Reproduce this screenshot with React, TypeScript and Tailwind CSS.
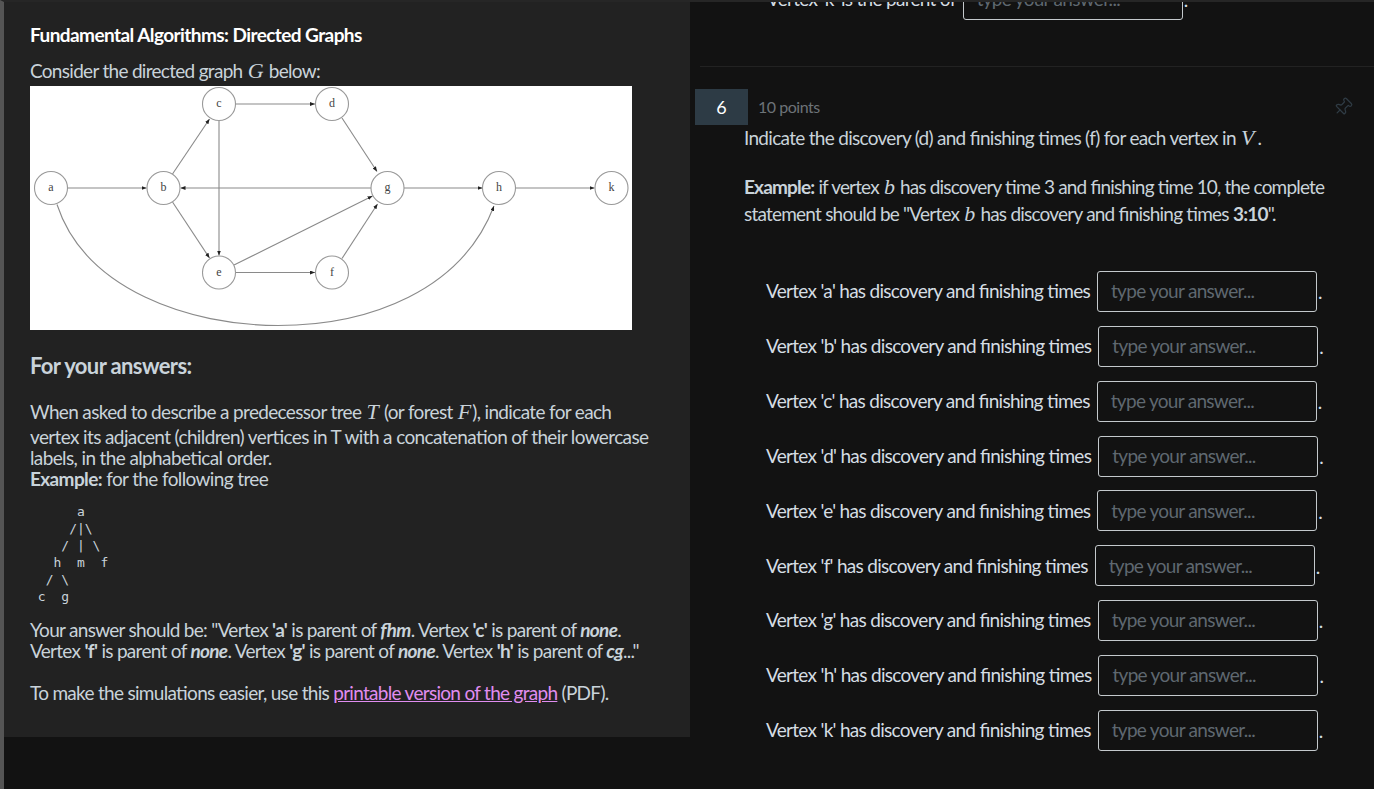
import { Pin } from 'lucide-react';

const nodes: [string, number, number][] = [
  ['a', 51, 188],
  ['b', 163.5, 188],
  ['c', 219, 104],
  ['d', 332, 104],
  ['e', 219, 272.5],
  ['f', 332, 272.5],
  ['g', 387.5, 188],
  ['h', 499, 188],
  ['k', 611.5, 188],
];

const edges: [number, number, number, number][] = [
  [67.5, 188, 146.5, 188],
  [172.5, 174, 209.5, 119],
  [235.5, 104, 315, 104],
  [219, 120.5, 219, 255.5],
  [342, 118, 377, 171.5],
  [371, 188, 180.5, 188],
  [172.5, 202, 209.5, 258],
  [235.5, 272.5, 315, 272.5],
  [234, 265, 372.5, 196],
  [342, 258.5, 377.5, 204],
  [404, 188, 482.5, 188],
  [515.5, 188, 594.5, 188],
];

const vertices = ['a', 'b', 'c', 'd', 'e', 'f', 'g', 'h', 'k'];

function Graph() {
  return (
    <svg viewBox="30 86 602 244" className="block w-[602px] h-[244px] bg-white tracking-normal">
      <defs>
        <marker id="tip" markerWidth="5" markerHeight="4" refX="5" refY="2" orient="auto" markerUnits="userSpaceOnUse">
          <path d="M0 0L5 2L0 4z" fill="#222" />
        </marker>
      </defs>
      {edges.map(([x1, y1, x2, y2], i) => (
        <line key={i} x1={x1} y1={y1} x2={x2} y2={y2} stroke="#8a8a8a" strokeWidth="1.1" markerEnd="url(#tip)" />
      ))}
      <path
        d="M57 204.5C85 290 190 325.5 278 325.5C370 325.5 462 290 494 206"
        fill="none"
        stroke="#8a8a8a"
        strokeWidth="1.1"
        markerEnd="url(#tip)"
      />
      {nodes.map(([label, x, y]) => (
        <g key={label}>
          <circle cx={x} cy={y} r="16.5" fill="white" stroke="#999" strokeWidth="1.1" />
          <text x={x} y={y + 3} textAnchor="middle" fontSize="12" fill="#444" fontFamily="'Liberation Serif', serif">
            {label}
          </text>
        </g>
      ))}
    </svg>
  );
}

function M({ children }: { children: string }) {
  return <span className="mx-px font-['Liberation_Serif',serif] italic text-[22px] leading-none tracking-normal">{children}</span>;
}

function AnswerRow({ label }: { label: string }) {
  return (
    <div className="flex items-center h-[41px] mb-[13.86px] pl-[76px] text-[#d5dde3]">
      <span>{label}</span>
      <div className="ml-[7px] w-[220px] h-[41px] border border-[#c4c9cc] rounded-[3px] px-[13px] flex items-center text-[#5f6870]">
        type your answer...
      </div>
      <span className="self-center mt-[2px] ml-px">.</span>
    </div>
  );
}

export default function App() {
  return (
    <div className="h-[789px] overflow-hidden bg-[#121212] border-t-2 border-[#262626] border-l-4 border-l-[#555555] flex font-['Lato',sans-serif] text-[19px] tracking-[-0.037em] [font-feature-settings:'liga'_1]">
      <div className="w-[686px] h-[735px] shrink-0 bg-[#222222] pl-[26px] text-[#c9d3da]">
        <h1 className="pt-[21px] leading-[24px] font-bold text-white tracking-[-0.03em]">Fundamental Algorithms: Directed Graphs</h1>
        <p className="mt-[11px] h-[28px] leading-[26px]">
          Consider the directed graph <M>G</M> below:
        </p>
        <Graph />
        <h2 className="mt-[22px] text-[22px] leading-[28px] font-bold tracking-[-0.028em]">For your answers:</h2>
        <div className="mt-[21px] leading-[21px] tracking-[-0.033em]">
          <p className="h-[26px] leading-[20px] tracking-[-0.035em]">
            When asked to describe a predecessor tree <M>T</M> (or forest <M>F</M>), indicate for each
          </p>
          <p className="-mt-px">vertex its adjacent (children) vertices in T with a concatenation of their lowercase</p>
          <p>labels, in the alphabetical order.</p>
          <p>
            <b>Example:</b> for the following tree
          </p>
        </div>
        <pre className="mt-[14px] font-['DejaVu_Sans_Mono',monospace] text-[13px] leading-[17.1px] tracking-normal text-[#c9d3da]">{`      a
     /|\\
    / | \\
   h  m  f
  / \\
 c  g`}</pre>
        <div className="mt-[13px] leading-[21px] tracking-[-0.037em]">
          <p>
            Your answer should be: "Vertex <b>'a'</b> is parent of <b><i>fhm</i></b>. Vertex <b>'c'</b> is parent of <b><i>none</i></b>.
          </p>
          <p>
            Vertex <b>'f'</b> is parent of <b><i>none</i></b>. Vertex <b>'g'</b> is parent of <b><i>none</i></b>. Vertex <b>'h'</b> is parent of <b><i>cg</i></b>..."
          </p>
          <p className="mt-[21px]">
            To make the simulations easier, use this <span className="text-[#e08df0] underline">printable version of the graph</span> (PDF).
          </p>
        </div>
      </div>

      <div className="flex-1 min-w-0 text-[#c9d3da]">
        <div className="-mt-[23px] h-[41px] pl-[77px] flex items-center text-[#d5dde3]">
          <span>Vertex 'k' is the parent of</span>
          <div className="ml-[7px] w-[220px] h-[41px] border border-[#c4c9cc] rounded-[3px] px-[13px] flex items-center text-[#5f6870]">
            type your answer...
          </div>
          <span className="self-center mt-[2px] ml-px">.</span>
        </div>
        <div className="mt-[46px] ml-[10px] border-t border-[#222222]" />
        <div className="mt-[22px] flex items-center h-[36px] pl-[5px]">
          <div className="w-[53px] h-[36px] bg-[#2d3b45] text-white text-[18px] tracking-normal flex items-center justify-center">6</div>
          <span className="ml-[10px] text-[16px] text-[#6d7378] tracking-[-0.03em]">10 points</span>
          <Pin className="ml-auto mr-[21px] w-5 h-5 rotate-45 text-[#2f3b44]" strokeWidth={1.5} />
        </div>
        <p className="pl-[54px] h-[26px] leading-[26px]">
          Indicate the discovery (d) and finishing times (f) for each vertex in <M>V</M><span className="ml-[2px]">.</span>
        </p>
        <div className="mt-[22px] pl-[54px] leading-[27px] w-[660px] tracking-[-0.041em]">
          <p className="tracking-[-0.0435em]">
            <b>Example:</b> if vertex <M>b</M> has discovery time 3 and finishing time 10, the complete
          </p>
          <p>
            statement should be "Vertex <M>b</M> has discovery and finishing times <b>3:10</b>".
          </p>
        </div>
        <div className="mt-[44px]">
          {vertices.map((v) => (
            <AnswerRow key={v} label={`Vertex '${v}' has discovery and finishing times`} />
          ))}
        </div>
      </div>
    </div>
  );
}
